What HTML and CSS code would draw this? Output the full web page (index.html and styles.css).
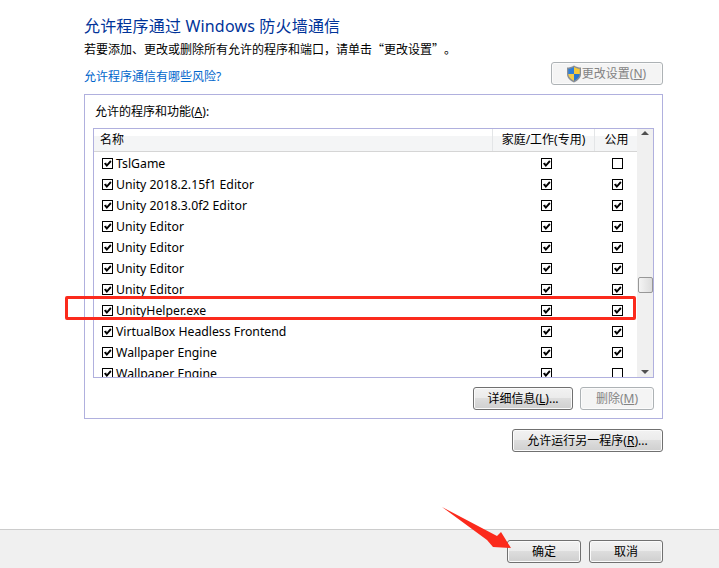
FILE: index.html
```html
<!DOCTYPE html>
<html lang="zh-CN">
<head>
<meta charset="utf-8">
<title>允许的程序</title>
<link rel="stylesheet" href="styles.css">
</head>
<body>
<div class="page">
  <main class="content">
    <h1 class="title">允许程序通过 Windows 防火墙通信</h1>
    <p class="desc">若要添加、更改或删除所有允许的程序和端口，请单击“更改设置”。</p>
    <div class="link-row">
      <a class="link">允许程序通信有哪些风险?</a>
      <button class="btn btn-settings" disabled>
        <svg class="shield" viewBox="0 0 16 18" width="16" height="18">
          <path d="M8 .5 C10.5 2 12.5 2.6 15 2.6 V9 C15 13 12 15.8 8 17.5 C4 15.8 1 13 1 9 V2.6 C3.5 2.6 5.5 2 8 .5Z" fill="#8a8f96"/>
          <path d="M8 2 V9 H2.3 V3.8 C4.5 3.7 6 3.2 8 2Z" fill="#2f7fd6"/>
          <path d="M8 2 C10 3.2 11.5 3.7 13.7 3.8 V9 H8Z" fill="#f5c93a"/>
          <path d="M2.3 9 H8 V15.8 C4.8 14.3 2.6 12.2 2.3 9Z" fill="#f2cb4a"/>
          <path d="M8 9 H13.7 C13.4 12.2 11.2 14.3 8 15.8Z" fill="#2a76cc"/>
        </svg>
        <span>更改设置(<u>N</u>)</span>
      </button>
    </div>
    <section class="group">
      <div class="group-label">允许的程序和功能(<u>A</u>):</div>
      <div class="list">
        <div class="list-main">
          <div class="row head">
            <div class="cell-name">名称</div>
            <div class="cell-check">家庭/工作(专用)</div>
            <div class="cell-check">公用</div>
          </div>
          <div class="rows">
            <div class="row"><div class="cell-name"><i class="cb on"></i>TslGame</div><div class="cell-check"><i class="cb on"></i></div><div class="cell-check"><i class="cb"></i></div></div>
            <div class="row"><div class="cell-name"><i class="cb on"></i>Unity 2018.2.15f1 Editor</div><div class="cell-check"><i class="cb on"></i></div><div class="cell-check"><i class="cb on"></i></div></div>
            <div class="row"><div class="cell-name"><i class="cb on"></i>Unity 2018.3.0f2 Editor</div><div class="cell-check"><i class="cb on"></i></div><div class="cell-check"><i class="cb on"></i></div></div>
            <div class="row"><div class="cell-name"><i class="cb on"></i>Unity Editor</div><div class="cell-check"><i class="cb on"></i></div><div class="cell-check"><i class="cb on"></i></div></div>
            <div class="row"><div class="cell-name"><i class="cb on"></i>Unity Editor</div><div class="cell-check"><i class="cb on"></i></div><div class="cell-check"><i class="cb on"></i></div></div>
            <div class="row"><div class="cell-name"><i class="cb on"></i>Unity Editor</div><div class="cell-check"><i class="cb on"></i></div><div class="cell-check"><i class="cb on"></i></div></div>
            <div class="row"><div class="cell-name"><i class="cb on"></i>Unity Editor</div><div class="cell-check"><i class="cb on"></i></div><div class="cell-check"><i class="cb on"></i></div></div>
            <div class="row"><div class="cell-name"><i class="cb on"></i>UnityHelper.exe</div><div class="cell-check"><i class="cb on"></i></div><div class="cell-check"><i class="cb on"></i></div></div>
            <div class="row"><div class="cell-name"><i class="cb on"></i>VirtualBox Headless Frontend</div><div class="cell-check"><i class="cb on"></i></div><div class="cell-check"><i class="cb on"></i></div></div>
            <div class="row"><div class="cell-name"><i class="cb on"></i>Wallpaper Engine</div><div class="cell-check"><i class="cb on"></i></div><div class="cell-check"><i class="cb on"></i></div></div>
            <div class="row"><div class="cell-name"><i class="cb on"></i>Wallpaper Engine</div><div class="cell-check"><i class="cb on"></i></div><div class="cell-check"><i class="cb"></i></div></div>
          </div>
        </div>
        <div class="scrollbar">
          <span class="arrow arrow-up"></span>
          <span class="thumb"></span>
          <span class="arrow arrow-down"></span>
        </div>
      </div>
      <div class="group-actions">
        <button class="btn btn-detail">详细信息(<u>L</u>)...</button>
        <button class="btn btn-remove" disabled>删除(<u>M</u>)</button>
      </div>
    </section>
    <div class="another">
      <button class="btn btn-another">允许运行另一程序(<u>R</u>)...</button>
    </div>
  </main>
  <footer class="footer">
    <button class="btn btn-footer">确定</button>
    <button class="btn btn-footer">取消</button>
  </footer>
  <div class="mark-rect"></div>
  <svg class="mark-arrow" viewBox="0 0 72 42" width="72" height="42">
    <path d="M0 0 L55 29 L59 25 L69 41 L51 40 L45 33 Z" fill="#fb2a1c"/>
  </svg>
</div>
</body>
</html>
```
FILE: styles.css
```css
* { box-sizing: border-box; }
html, body { margin: 0; padding: 0; background: #fff; }
body {
  font-family: "Noto Sans", "Noto Sans CJK SC", sans-serif;
  font-size: 12px;
  color: #000;
}
.page {
  position: relative;
  width: 719px;
  height: 568px;
  display: flex;
  flex-direction: column;
  overflow: hidden;
}
.content {
  flex: 1;
  padding: 15px 56px 0 84px;
}
.title {
  margin: 0;
  font-size: 16px;
  font-weight: 400;
  line-height: 22px;
  letter-spacing: 0.18px;
  color: #003399;
}
.desc {
  margin: 0;
  padding-top: 1px;
  line-height: 21px;
  white-space: nowrap;
  font-family: "Noto Sans CJK SC", "Noto Sans", sans-serif;
  text-spacing-trim: space-all;
}
.link-row {
  display: flex;
  justify-content: space-between;
  align-items: flex-start;
  height: 35px;
  padding-top: 4px;
}
.link { color: #0066cc; line-height: 19px; margin-top: 4px; }
.btn {
  font: inherit;
  color: #000;
  height: 23px;
  padding: 0;
  border: 1px solid #707070;
  border-radius: 3px;
  box-shadow: inset 0 0 0 1px #fbfbfb;
  background: linear-gradient(#f2f2f2 0, #ebebeb 48%, #dddddd 50%, #cfcfcf 100%);
  line-height: 19px;
  white-space: nowrap;
}
.btn:disabled {
  color: #838383;
  border-color: #adb2b5;
  background: #f4f4f4;
}
.btn-settings {
  width: 112px;
  display: flex;
  align-items: center;
  justify-content: center;
  margin-top: -1px;
  padding-right: 2px;
}
.shield { flex: none; }
.group {
  height: 325px;
  border: 1px solid #b0b0de;
  padding: 8px 8px 0;
}
.group-label { line-height: 18px; height: 25px; padding-left: 2px; }
.list {
  display: flex;
  height: 250px;
  border: 1px solid #b0b0de;
}
.list-main { flex: 1; min-width: 0; overflow: hidden; }
.row {
  display: grid;
  grid-template-columns: 401px 103px 39px;
  height: 21px;
  align-items: center;
}
.row.head {
  grid-template-columns: 399px 102px 43px;
  height: 23px;
  border-bottom: 1px solid #d5d5d5;
  background: linear-gradient(#fff 0, #fff 30%, #f4f5f6 31%, #f4f5f6 100%);
}
.head .cell-name { padding-left: 6px; }
.head .cell-name, .head .cell-check {
  height: 22px;
  line-height: 24px;
  border-right: 1px solid #e3e5e7;
}
.head .cell-check:last-child { border-right: 0; }
.rows { padding-top: 1px; }
.rows .cell-name { font-size: 12.25px; }
.cell-name {
  display: flex;
  align-items: center;
  gap: 3px;
  padding-left: 8px;
  white-space: nowrap;
}
.cell-check { display: flex; justify-content: center; align-items: center; }
.cb {
  position: relative;
  flex: none;
  display: block;
  width: 11px;
  height: 11px;
  border: 1px solid #000;
  background: #fff;
}
.cb.on::after {
  content: "";
  position: absolute;
  inset: 0;
  background: #000;
  clip-path: polygon(10% 50%, 35% 40%, 42% 58%, 80% 15%, 95% 30%, 42% 90%);
}
.scrollbar {
  width: 16px;
  background: #f0f0f0;
  position: relative;
  display: flex;
  flex-direction: column;
  align-items: center;
}
.arrow { position: absolute; left: 4px; width: 0; height: 0; border: 4px solid transparent; }
.arrow-up { top: 2px; border-top: 0; border-bottom: 4px solid #505050; }
.arrow-down { bottom: 3px; border-bottom: 0; border-top: 4px solid #505050; }
.thumb {
  position: absolute;
  top: 148px;
  left: 1px;
  width: 15px;
  height: 16px;
  border: 1px solid #979797;
  border-radius: 2px;
  background: linear-gradient(90deg, #f4f4f4, #dcdcdc);
}
.group-actions {
  display: flex;
  justify-content: flex-end;
  gap: 7px;
  margin-top: 9px;
}
.btn-detail { width: 100px; }
.btn-remove { width: 74px; }
.another {
  display: flex;
  justify-content: flex-end;
  margin-top: 10px;
}
.btn-another { width: 151px; }
.footer {
  height: 39px;
  background: #f0f0f0;
  border-top: 1px solid #ccc;
  display: flex;
  justify-content: flex-end;
  gap: 8px;
  padding: 10px 56px 0 0;
}
.btn-footer { width: 74px; }
.mark-rect {
  position: absolute;
  left: 65px;
  top: 296px;
  width: 571px;
  height: 24px;
  border: 3px solid #fb2a1c;
  border-radius: 2px;
}
.mark-arrow {
  position: absolute;
  left: 442px;
  top: 507px;
}
```
